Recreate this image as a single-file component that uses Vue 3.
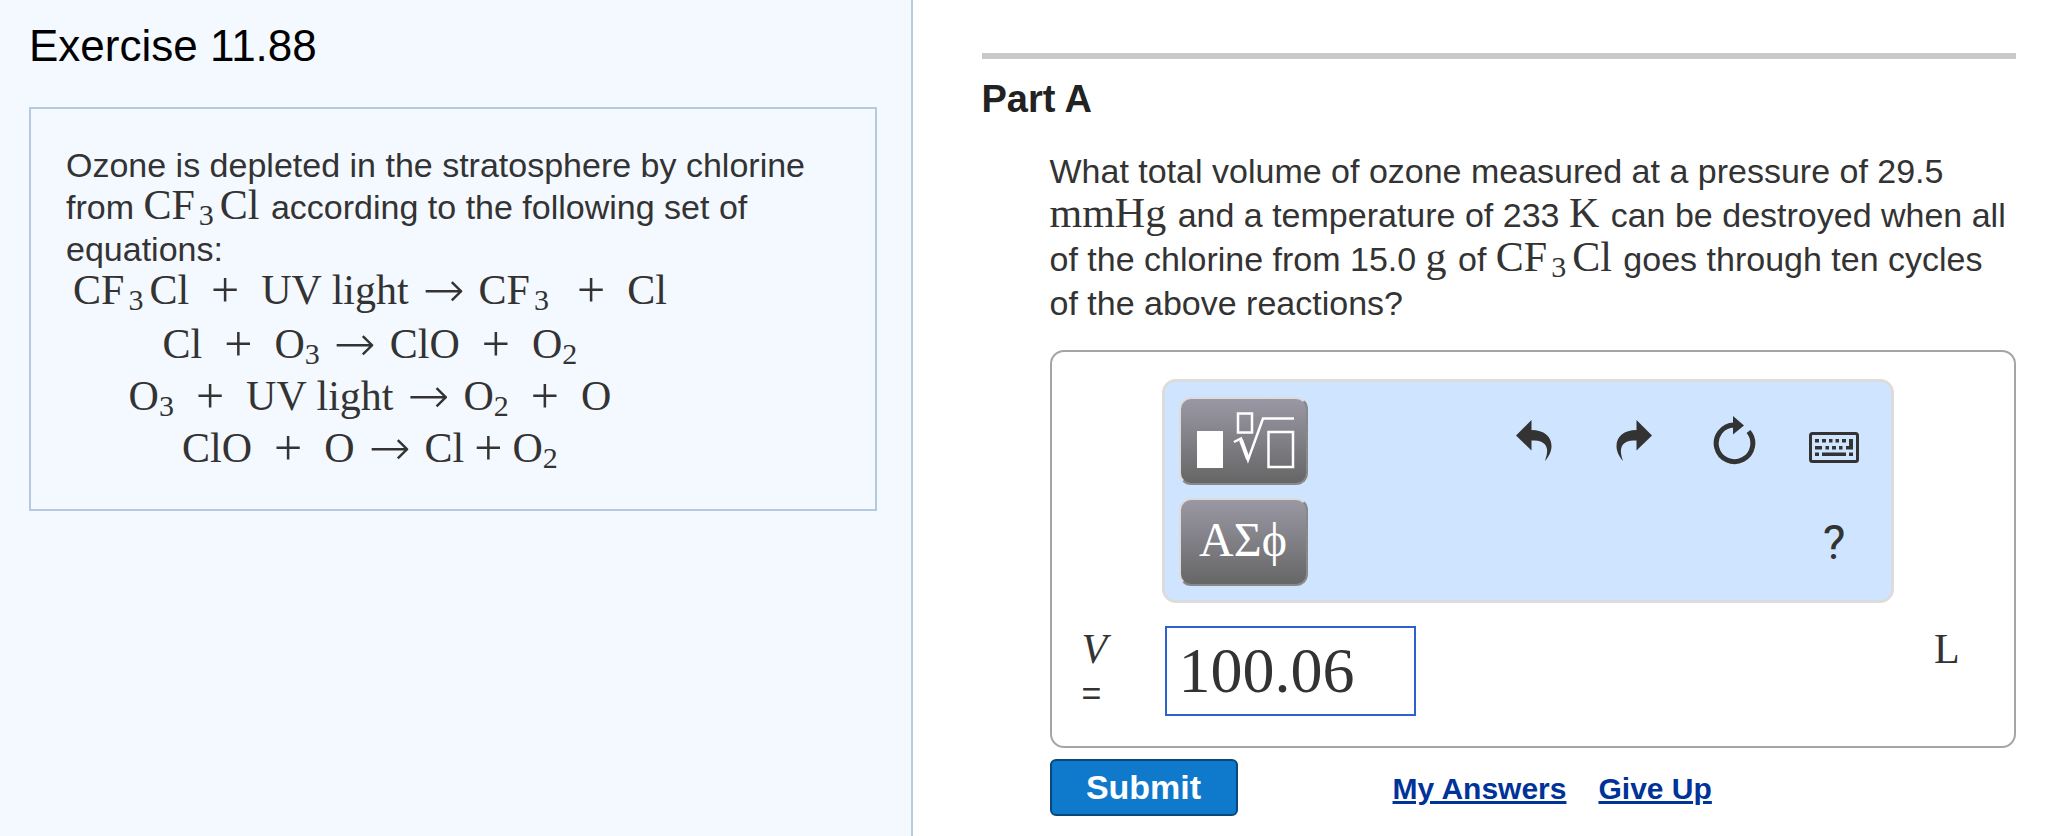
<script setup>
import { ref } from 'vue';

const answer = ref('100.06');

// each token is a formula, a plain word, or an operator
const equations = [
  [
    { parts: ['CF', 3, 'Cl'], loose: true }, { op: '+' }, { parts: ['UV light'] }, { op: '→' },
    { parts: ['CF', 3], loose: true }, { op: '+' }, { parts: ['Cl'] }
  ],
  [
    { parts: ['Cl'] }, { op: '+' }, { parts: ['O', 3] }, { op: '→' },
    { parts: ['ClO'] }, { op: '+' }, { parts: ['O', 2] }
  ],
  [
    { parts: ['O', 3] }, { op: '+' }, { parts: ['UV light'] }, { op: '→' },
    { parts: ['O', 2] }, { op: '+' }, { parts: ['O'] }
  ],
  [
    { parts: ['ClO'] }, { op: '+' }, { parts: ['O'] }, { op: '→' },
    { parts: ['Cl'] }, { op: '+', tight: true }, { parts: ['O', 2] }
  ]
];
</script>

<template>
  <div class="page">
    <aside class="left">
      <h1>Exercise 11.88</h1>
      <div class="intro">
        <p>
          Ozone is depleted in the stratosphere by chlorine from
          <span class="math loose">CF<sub>3</sub>Cl</span> according to the following set of equations:
        </p>
        <div class="equations">
          <div v-for="(eq, i) in equations" :key="i" class="equation">
            <template v-for="(t, j) in eq" :key="j">
              <span v-if="t.op" :class="[t.op === '+' ? 'plus' : 'arrow', { tight: t.tight }]">{{ t.op }}</span>
              <span v-else :class="{ loose: t.loose }"><template v-for="(p, k) in t.parts" :key="k"><sub v-if="typeof p === 'number'">{{ p }}</sub><template v-else>{{ p }}</template></template></span>
            </template>
          </div>
        </div>
      </div>
    </aside>

    <main class="right">
      <section class="part">
        <h2>Part A</h2>
        <div class="part-body">
          <p class="question">
            What total volume of ozone measured at a pressure of 29.5
            <span class="math">mmHg</span> and a temperature of 233 <span class="math">K</span> can be destroyed when all
            of the chlorine from 15.0 <span class="math">g</span> of
            <span class="math loose">CF<sub>3</sub>Cl</span> goes through ten cycles <br>of the above reactions?
          </p>

          <div class="answer-box">
            <div class="toolbar">
              <div class="templates">
                <button type="button" class="btn-dark roots" aria-label="Templates">
                  <svg width="98" height="58" viewBox="0 0 98 58" fill="none" stroke="#fff" stroke-width="2.5">
                    <rect x="0" y="19" width="26" height="37" fill="#fff" stroke="none" />
                    <rect x="41" y="1.500" width="14" height="19" />
                    <path d="M37 30l7-3.500L51 48 66 6.500h31" />
                    <path d="M44 28l7 19" stroke-width="4" />
                    <rect x="71.500" y="20" width="24.500" height="35" />
                  </svg>
                </button>
                <button type="button" class="btn-dark symbols" aria-label="Symbols">ΑΣϕ</button>
              </div>
              <div class="actions">
                <button type="button" aria-label="Undo">
                  <svg width="36" height="42" viewBox="0 0 36 42" fill="#333">
                    <path d="M0 15.500L15.500 0v10C28 10 35.500 16.500 35.500 26c0 6-3 11-6.500 15C31 35 32.500 29 29 24.500c-3-3.500-7-4.500-13.500-4v10z" />
                  </svg>
                </button>
                <button type="button" aria-label="Redo">
                  <svg width="36" height="42" viewBox="0 0 36 42" fill="#333">
                    <path d="M36 15.500L20.500 0v10C8 10 .5 16.500 .5 26c0 6 3 11 6.500 15C5 35 3.500 29 7 24.500c3-3.500 7-4.500 13.500-4v10z" />
                  </svg>
                </button>
                <button type="button" aria-label="Reset">
                  <svg width="44" height="50" viewBox="0 0 44 50">
                    <path d="M22 9A18.300 18.300 0 1 0 36.500 15.500" fill="none" stroke="#333" stroke-width="5" />
                    <path d="M21 0l11 9.500L21 18.500z" fill="#333" />
                  </svg>
                </button>
                <button type="button" aria-label="Keyboard shortcuts">
                  <svg class="keyboard" width="50" height="31" viewBox="0 0 50 31" fill="#333">
                    <rect x="1.500" y="1.500" width="47" height="28" rx="2" fill="none" stroke="#333" stroke-width="3" />
                    <path d="M6 7h4v3.500H6zM13 7h4v3.500h-4zM20 7h3.500v3.500H20zM26.500 7H30v3.500h-3.500zM33 7h4v3.500h-4zM6 14h7v3.500H6zM16.500 14H20v3.500h-3.500zM23 14h4v3.500h-4zM30 14h3.500v3.500H30zM6 20.500h4V24H6zM13 20.500h24V24H13zM40 20.500h4V24h-4zM40 7h4v10.500h-7V14h3z" />
                  </svg>
                </button>
                <button type="button" class="help" aria-label="Help">?</button>
              </div>
            </div>
            <label class="variable" for="answer"><i>V</i><span>=</span></label>
            <input id="answer" v-model="answer" type="text">
            <span class="unit">L</span>
          </div>

          <div class="footer">
            <button type="button" class="btn-submit">Submit</button>
            <div class="links">
              <a href="#">My Answers</a>
              <a href="#">Give Up</a>
            </div>
          </div>
        </div>
      </section>
    </main>
  </div>
</template>

<style>
body {
  margin: 0;
  background: #fff;
}
</style>

<style scoped>
* {
  box-sizing: border-box;
}
.page {
  display: flex;
  min-height: 100vh;
  font-family: "Liberation Sans", Arial, sans-serif;
  font-size: 34px;
  color: #333;
}
h1, h2, p {
  margin: 0;
}
button {
  padding: 0;
  border: none;
  background: none;
  font-family: inherit;
  color: inherit;
  cursor: pointer;
}
svg {
  display: block;
}

/* left */
.left {
  flex: none;
  width: 44.6%;
  padding: 20px 34px 20px 29px;
  background: #f4f9ff;
  border-right: 2px solid #b8cce0;
}
h1 {
  font-size: 44px;
  font-weight: normal;
  line-height: 52px;
  color: #000;
}
.intro {
  margin-top: 35px;
  padding: 35px;
  border: 2px solid #b5cade;
}
.intro p {
  line-height: 42px;
}
.math, .equations {
  font-family: "Liberation Serif", "Times New Roman", serif;
  font-size: 42px;
}
.math {
  margin-right: 2px;
  line-height: 1px;
}
sub {
  font-size: 30px;
  line-height: 1px;
  vertical-align: -6px;
}
.loose sub {
  margin: 0 6px 0 4px;
}
.equations {
  width: fit-content;
  margin-left: 7px;
}
.equation {
  display: flex;
  justify-content: center;
  align-items: center;
  height: 52px;
  line-height: 42px;
  white-space: nowrap;
}
.equation:first-child {
  height: 40px;
  margin-bottom: 8px;
}
.plus {
  margin: 0 22px;
  font-size: 50px;
}
.plus.tight {
  margin: 0 10px;
}
.arrow {
  margin: 0 14px;
  font-family: "DejaVu Sans", sans-serif;
  font-size: 50px;
  font-weight: 200;
}

/* right */
.right {
  flex: 1;
  padding: 53px 30px 20px 69px;
}
.part {
  border-top: 6px solid #c9c9c9;
}
h2 {
  margin-top: 18px;
  font-size: 38px;
  line-height: 44px;
  color: #222;
}
.part-body {
  margin-top: 28px;
  margin-left: 68px;
}
.question {
  line-height: 44px;
}
.answer-box {
  display: grid;
  grid-template-columns: 80px 1fr 80px;
  margin-top: 25px;
  padding: 27px 0 30px 30px;
  border: 2px solid #a5a5a5;
  border-radius: 14px;
}
.toolbar {
  grid-column: 2;
  display: flex;
  justify-content: space-between;
  margin-right: 40px;
  padding: 15px 15px 14px 14px;
  background: #cfe5ff;
  border: 3px solid #dcdcdc;
  border-radius: 14px;
}
.templates {
  display: flex;
  flex-direction: column;
  gap: 13px;
}
.btn-dark {
  display: flex;
  justify-content: center;
  align-items: center;
  width: 129px;
  height: 88px;
  border: 2px solid;
  border-color: #dcdcdc #888 #888 #dcdcdc;
  border-radius: 12px;
  background: linear-gradient(#9a98a4, #666);
  color: #fff;
}
.roots {
  padding-left: 6px;
}
.symbols {
  padding-bottom: 6px;
  font-family: "Liberation Serif", "Times New Roman", serif;
  font-size: 48px;
}
.actions {
  display: grid;
  grid-template-columns: repeat(4, 100px);
  grid-template-rows: 88px 88px;
  row-gap: 13px;
  margin-right: -8px;
}
.actions button {
  display: flex;
  justify-content: center;
  align-items: center;
}
.keyboard {
  margin-top: 12px;
}
.actions .help {
  grid-column: 4;
  font-family: Roboto, "Liberation Sans", sans-serif;
  font-size: 48px;
}
.variable {
  grid-column: 1;
  display: flex;
  flex-direction: column;
  margin-top: 22px;
  line-height: 40px;
}
.variable i, .unit {
  font-family: "Liberation Serif", "Times New Roman", serif;
  font-size: 42px;
  line-height: 48px;
}
input {
  width: 251px;
  height: 90px;
  margin: 23px 0 0 3px;
  padding: 0 12px;
  border: 2px solid #2b62cf;
  background: #fff;
  color: #333;
  font-family: "Liberation Serif", "Times New Roman", serif;
  font-size: 64px;
  outline: none;
}
.unit {
  margin-top: 22px;
}
.footer {
  display: flex;
  align-items: center;
  margin-top: 11px;
}
.btn-submit {
  width: 188px;
  height: 57px;
  border: 2px solid #07497c;
  border-radius: 6px;
  background: #0f79cc;
  color: #fff;
  font-size: 34px;
  font-weight: bold;
}
.links {
  display: flex;
  gap: 32px;
  margin-left: 155px;
  padding-top: 2px;
  font-size: 30px;
  font-weight: bold;
}
.links a {
  color: #039;
}
</style>
